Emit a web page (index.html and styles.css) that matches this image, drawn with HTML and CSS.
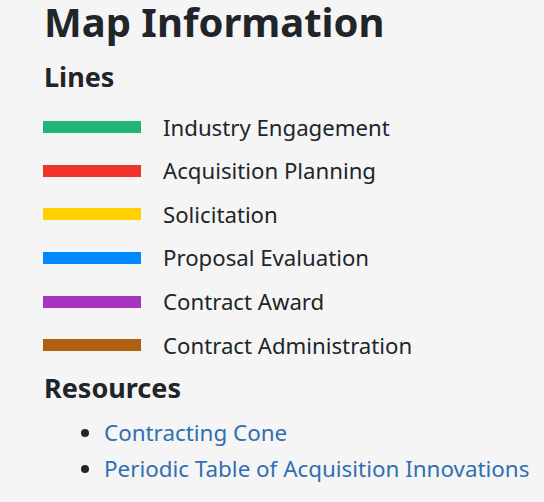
FILE: index.html
```html
<!DOCTYPE html>
<html>
<head>
<meta charset="utf-8">
<link rel="stylesheet" href="styles.css">
</head>
<body>
<div class="panel">
  <h1 class="title">Map Information</h1>
  <h3 class="section">Lines</h3>
  <ul class="legend">
    <li class="legend-row"><span class="swatch sw-green"></span><span class="label">Industry Engagement</span></li>
    <li class="legend-row"><span class="swatch sw-red"></span><span class="label">Acquisition Planning</span></li>
    <li class="legend-row"><span class="swatch sw-yellow"></span><span class="label">Solicitation</span></li>
    <li class="legend-row"><span class="swatch sw-blue"></span><span class="label">Proposal Evaluation</span></li>
    <li class="legend-row"><span class="swatch sw-purple"></span><span class="label">Contract Award</span></li>
    <li class="legend-row"><span class="swatch sw-brown"></span><span class="label">Contract Administration</span></li>
  </ul>
  <h3 class="section res">Resources</h3>
  <ul class="links">
    <li><a href="#">Contracting Cone</a></li>
    <li><a href="#">Periodic Table of Acquisition Innovations</a></li>
  </ul>
</div>
</body>
</html>
```

FILE: styles.css
```css
html, body {
  margin: 0;
  padding: 0;
  background: #f5f5f5;
}
body {
  font-family: "Noto Sans", "Open Sans", sans-serif;
  color: #212529;
}
.panel {
  padding: 2px 0 0 43px;
}
.title {
  font-size: 40px;
  font-weight: 700;
  line-height: 1;
  margin: 0;
  padding-left: 1px;
}
.section {
  font-size: 27px;
  font-weight: 700;
  line-height: 1.2;
  margin: 19px 0 0 0;
  padding-left: 1px;
}
.section.res {
  margin-top: 5px;
}
.legend {
  list-style: none;
  margin: 12px 0 0 0;
  padding: 0;
}
.legend-row {
  display: flex;
  align-items: center;
  gap: 22px;
  height: 43.6px;
}
.swatch {
  display: block;
  width: 98px;
  height: 12px;
  flex: none;
}
.label {
  font-size: 22.2px;
}
.sw-green { background: #22b573; }
.sw-red { background: #f03228; }
.sw-yellow { background: #ffd200; }
.sw-blue { background: #0088ff; }
.sw-purple { background: #a633c2; }
.sw-brown { background: #b0600f; }
.links {
  margin: 11px 0 0 0;
  padding-left: 61px;
}
.links li {
  font-size: 22.4px;
  line-height: 36px;
}
.links a {
  color: #306fb1;
  text-decoration: none;
}
```
